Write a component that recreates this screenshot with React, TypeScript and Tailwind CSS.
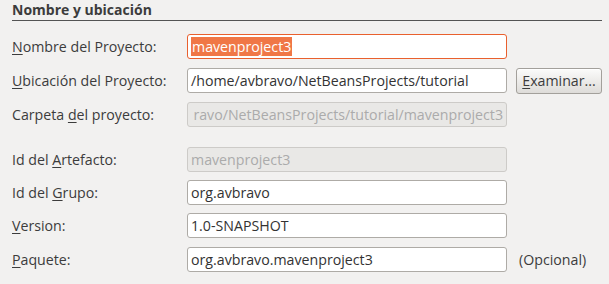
import React from "react";

const font = { fontFamily: '"Open Sans", "DejaVu Sans", sans-serif' };

function Label({ pre, u, post }: { pre?: string; u: string; post: string }) {
  return (
    <div className="w-[175px] shrink-0 text-[14.2px] text-[#3c3c3c]">
      {pre}
      <span className="underline underline-offset-2 decoration-1">{u}</span>
      {post}
    </div>
  );
}

function Input({ value, disabled, focused, selected, alignEnd }: { value: string; disabled?: boolean; focused?: boolean; selected?: boolean; alignEnd?: boolean }) {
  const base = "w-[320px] h-[25px] rounded-[3px] border flex items-center px-[3px] overflow-hidden whitespace-nowrap text-[14.2px]";
  const cls = disabled
    ? `${base} bg-[#e9e8e6] border-[#cdcbc8] text-[#ababab]`
    : focused
    ? `${base} bg-white border-[#e9602e] text-[#3c3c3c]`
    : `${base} bg-white border-[#aeaba6] text-[#333333]`;
  return (
    <div className={`${cls} ${alignEnd ? "justify-end" : ""}`}>
      {selected ? (
        <span className="bg-[#f07746] text-white px-[1px] leading-[19px]">{value}</span>
      ) : (
        <span>{value}</span>
      )}
    </div>
  );
}

export default function App() {
  return (
    <div className="w-[609px] h-[284px] bg-[#f2f1f0] pl-[12px] pr-[7px]" style={font}>
      <div className="h-[21px] border-b border-[#545454] text-[14px] font-bold text-[#3c3c3c] leading-[20px]">
        Nombre y ubicación
      </div>
      <div className="mt-[13px] flex items-center h-[25px]">
        <Label u="N" post="ombre del Proyecto:" />
        <Input value="mavenproject3" focused selected />
      </div>
      <div className="mt-[9px] flex items-center h-[25px]">
        <Label u="U" post="bicación del Proyecto:" />
        <Input value="/home/avbravo/NetBeansProjects/tutorial" />
        <button className="ml-[9px] w-[86px] h-[26px] rounded-[3px] border border-[#a3a09b] bg-gradient-to-b from-[#fbfbfa] to-[#dedcd9] text-[14.2px] text-[#3c3c3c] shadow-[inset_0_1px_0_#ffffff]">
          <span className="underline underline-offset-2 decoration-1">E</span>xaminar...
        </button>
      </div>
      <div className="mt-[9px] flex items-center h-[25px]">
        <Label pre="Carpeta " u="d" post="el proyecto:" />
        <Input value="ravo/NetBeansProjects/tutorial/mavenproject3" disabled alignEnd />
      </div>
      <div className="mt-[20px] flex items-center h-[25px]">
        <Label pre="Id del " u="A" post="rtefacto:" />
        <Input value="mavenproject3" disabled />
      </div>
      <div className="mt-[8px] flex items-center h-[25px]">
        <Label pre="Id del " u="G" post="rupo:" />
        <Input value="org.avbravo" />
      </div>
      <div className="mt-[8px] flex items-center h-[25px]">
        <Label u="V" post="ersion:" />
        <Input value="1.0-SNAPSHOT" />
      </div>
      <div className="mt-[9px] flex items-center h-[25px]">
        <Label u="P" post="aquete:" />
        <Input value="org.avbravo.mavenproject3" />
        <div className="ml-[12px] text-[14.2px] text-[#3c3c3c]">(Opcional)</div>
      </div>
    </div>
  );
}
